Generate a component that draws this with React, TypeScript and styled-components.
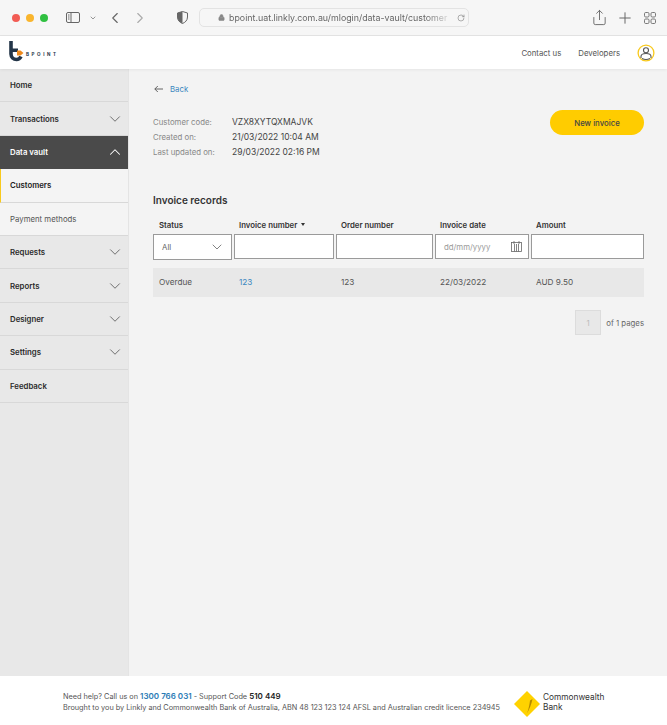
import { ChevronDown, ChevronLeft, ChevronRight, ChevronUp, Lock, Plus, RotateCw, Share } from "lucide-react";
import styled, { createGlobalStyle } from "styled-components";

const GlobalStyle = createGlobalStyle`
  html, body {
    margin: 0;
    padding: 0;
    background: #f3f3f3;
  }
  * {
    box-sizing: border-box;
  }
  body {
    font-family: Inter, "Liberation Sans", sans-serif;
    font-size: 7.8px;
    color: #444;
  }
`;

const COLUMNS = "79px 100px 97px 94px 1fr";

const Page = styled.div`
  width: 667px;
  height: 725px;
  display: flex;
  flex-direction: column;
  overflow: hidden;
`;

const Chrome = styled.div`
  height: 36px;
  flex: none;
  display: flex;
  align-items: center;
  background: #f6f6f6;
  border-bottom: 1px solid #e4e4e4;
  padding: 0 11px 0 12px;
  color: #666;
`;

const Light = styled.span<{ $color: string }>`
  width: 8px;
  height: 8px;
  border-radius: 50%;
  margin-right: 6px;
  background: ${(p) => p.$color};
`;

const ChromeIcons = styled.div`
  display: flex;
  align-items: center;
  margin-left: 12px;
`;

const UrlBar = styled.div`
  width: 270px;
  height: 19px;
  margin-left: 11px;
  border: 1px solid #e3e3e3;
  border-radius: 5px;
  display: flex;
  align-items: center;
  padding: 0 3px 0 18px;
  font-size: 8.85px;
  color: #666;
  gap: 4px;
  white-space: nowrap;
  overflow: hidden;
`;

const UrlText = styled.span`
  flex: 1;
  mask-image: linear-gradient(to right, #000 88%, transparent 100%);
`;

const ChromeRight = styled.div`
  margin-left: auto;
  display: flex;
  align-items: center;
  gap: 8px;
`;

const TabsSlot = styled.span`
  display: flex;
  margin-left: 2.5px;
`;

const Header = styled.header`
  height: 33px;
  flex: none;
  background: #fff;
  display: flex;
  align-items: center;
  padding: 0 12px 0 9px;
  box-shadow: 0 1px 3px rgba(0, 0, 0, 0.06);
  position: relative;
`;

const LogoMark = styled.svg`
  margin-top: -2px;
`;

const LogoText = styled.span`
  font-size: 4.5px;
  font-weight: 700;
  letter-spacing: 2.6px;
  color: #233548;
  margin: 3px 0 0 1px;
`;

const HeaderNav = styled.nav`
  margin-left: auto;
  display: flex;
  align-items: center;
  gap: 17px;
  color: #555;
`;

const Body = styled.div`
  flex: 1;
  display: flex;
  min-height: 0;
`;

const Sidebar = styled.aside`
  width: 129px;
  flex: none;
  background: #e8e8e8;
  border-right: 1px solid #e4e4e4;
`;

const NavRow = styled.div<{ $active?: boolean; $sub?: boolean; $current?: boolean }>`
  height: 33.4px;
  display: flex;
  align-items: center;
  justify-content: space-between;
  padding: 0 4px 0 ${(p) => (p.$current ? 9 : 10)}px;
  font-weight: ${(p) => (p.$sub && !p.$current ? 400 : 600)};
  font-size: 7.8px;
  color: ${(p) => (p.$active ? "#fff" : p.$current ? "#222" : p.$sub ? "#555" : "#2b2b2b")};
  background: ${(p) => (p.$active ? "#4a4a4a" : p.$sub ? "#f4f4f4" : "#e8e8e8")};
  border-bottom: 1px solid ${(p) => (p.$active ? "#4a4a4a" : "#d8d8d8")};
  border-left: ${(p) => (p.$current ? "1px solid #f8c91c" : "none")};
`;

const Main = styled.main`
  flex: 1;
  padding: 14px 23px 0 24px;
  min-width: 0;
`;

const BackRow = styled.div`
  display: flex;
  align-items: center;
  gap: 7px;
  height: 12px;
  padding-left: 1px;
  color: #555;
`;

const BlueLink = styled.a`
  color: #3a87c0;
`;

const InfoRow = styled.div`
  display: flex;
  justify-content: space-between;
  align-items: flex-start;
  margin-top: 19px;
`;

const InfoGrid = styled.dl`
  display: grid;
  grid-template-columns: 79px auto;
  grid-auto-rows: 15px;
  align-items: center;
  margin: 0;
`;

const InfoLabel = styled.dt`
  color: #888;
`;

const InfoValue = styled.dd`
  margin: 0;
  color: #444;
  font-size: 8.5px;
`;

const PrimaryButton = styled.button`
  width: 94px;
  height: 25px;
  margin-top: -4px;
  border: 0;
  border-radius: 13px;
  background: #ffcc00;
  color: #444;
  font: inherit;
  font-weight: 500;
`;

const SectionTitle = styled.h2`
  margin: 35px 0 0;
  font-size: 10px;
  font-weight: 600;
  color: #333;
  line-height: 13px;
`;

const RecordGrid = styled.div`
  display: grid;
  grid-template-columns: ${COLUMNS};
  column-gap: 2px;
  margin-top: 10px;
`;

const ColHead = styled.div`
  height: 17px;
  padding: 0 0 1px 5px;
  font-weight: 600;
  color: #333;
  display: flex;
  align-items: center;
  gap: 4px;

  &:first-child {
    padding-left: 6px;
  }
`;

const SortMark = styled.span`
  width: 0;
  height: 0;
  border-left: 2.5px solid transparent;
  border-right: 2.5px solid transparent;
  border-top: 3px solid #333;
  margin-top: -2px;
`;

const FilterCell = styled.div<{ $tall?: boolean }>`
  height: ${(p) => (p.$tall ? 26 : 25)}px;
  background: #fff;
  border: 1px solid #9a9a9a;
  display: flex;
  align-items: center;
  justify-content: space-between;
  padding: 0 6px 0 8px;
  color: #666;
`;

const Placeholder = styled.span`
  color: #999;
`;

const DataRow = styled.div`
  display: grid;
  grid-template-columns: ${COLUMNS};
  column-gap: 2px;
  align-items: center;
  height: 29px;
  margin-top: 8px;
  padding-bottom: 1px;
  background: #e8e8e8;
`;

const DataCell = styled.div`
  padding-left: 5px;
  color: #555;
  font-size: 8.2px;

  &:first-child {
    padding-left: 6px;
  }
`;

const Pager = styled.div`
  display: flex;
  justify-content: flex-end;
  align-items: center;
  gap: 5px;
  margin-top: 13px;
  color: #666;
`;

const PageBox = styled.div`
  width: 26px;
  height: 25px;
  background: #e8e8e8;
  border: 1px solid #dcdcdc;
  color: #bbb;
  display: flex;
  align-items: center;
  justify-content: center;
`;

const Footer = styled.footer`
  height: 49px;
  flex: none;
  background: #fff;
  display: flex;
  align-items: center;
  padding: 7px 0 0 63px;
`;

const FooterText = styled.div`
  width: 451px;
  color: #555;
  font-size: 7.3px;
  line-height: 11.5px;
  margin-top: -4px;
`;

const Phone = styled.strong`
  color: #2a7ab5;
  font-weight: 600;
  font-size: 8px;
`;

const Code = styled.strong`
  color: #222;
  font-weight: 600;
  font-size: 8px;
`;

const BankName = styled.div`
  margin: -5px 0 0 3px;
  font-size: 8.3px;
  line-height: 10px;
  color: #333;
`;

const navTop = [
  { label: "Home" },
  { label: "Transactions", chevron: true },
];
const navBottom = ["Requests", "Reports", "Designer", "Settings"];

function Logo() {
  return (
    <LogoMark width="16" height="21" viewBox="0 0 16 21" fill="none">
      <path d="M2 0V13a5.500 5.500 0 0 0 5.500 5.500c2 0 3.500-1 4.500-3M2 9.300H9" stroke="#233548" strokeWidth="3.600" />
      <path d="M8 9.500h3.500L14.500 12l-3 2.500H8z" fill="#ee8a1d" />
    </LogoMark>
  );
}

function SidebarToggle() {
  return (
    <svg width="14" height="11" viewBox="0 0 14 11" fill="none" stroke="#666" strokeWidth="1">
      <rect x="0.500" y="0.500" width="13" height="10" rx="1.500" />
      <path d="M5 0.500v10M2 3h1.500M2 5h1.500M2 7h1.500" />
    </svg>
  );
}

function Shield() {
  return (
    <svg width="11" height="13" viewBox="0 0 11 13">
      <path d="M5.500 0.500 10.500 2v4c0 3.500-2.500 5.500-5 6.500C3 11.500 0.500 9.500 0.500 6V2z" fill="none" stroke="#666" />
      <path d="M5.500 0.500 0.500 2v4c0 3.500 2.500 5.500 5 6.500z" fill="#666" />
    </svg>
  );
}

function Tabs() {
  return (
    <svg width="12" height="12" viewBox="0 0 12 12" fill="none" stroke="#777" strokeWidth="1">
      <rect x="0.500" y="0.500" width="4.500" height="4.500" rx="1.200" />
      <rect x="7" y="0.500" width="4.500" height="4.500" rx="1.200" />
      <rect x="0.500" y="7" width="4.500" height="4.500" rx="1.200" />
      <rect x="7" y="7" width="4.500" height="4.500" rx="1.200" />
    </svg>
  );
}

function Avatar() {
  return (
    <svg width="18" height="18" viewBox="0 0 18 18" fill="none">
      <circle cx="9" cy="9" r="7.900" fill="#fff" stroke="#f8c91c" strokeWidth="1.300" />
      <circle cx="9" cy="6.300" r="2.500" stroke="#555" strokeWidth="1.100" />
      <path d="M4 14v-1.500c0-2 1.500-3 5-3s5 1 5 3V14M5 14.500c2.500 1.300 5.500 1.300 8 0" stroke="#555" strokeWidth="1.100" />
    </svg>
  );
}

function BackArrow() {
  return (
    <svg width="9" height="8" viewBox="0 0 9 8" fill="none" stroke="#555" strokeWidth="0.900">
      <path d="M9 4H0.800M3.800 1 0.800 4l3 3" />
    </svg>
  );
}

function Calendar() {
  return (
    <svg width="11" height="11" viewBox="0 0 11 11" fill="none" stroke="#666" strokeWidth="0.800">
      <rect x="0.500" y="1.500" width="10" height="9" />
      <path d="M3 0v3M8 0v3M3.500 3v7.500M5.500 3v7.500M7.500 3v7.500" />
    </svg>
  );
}

function BankLogo() {
  return (
    <svg width="26" height="26" viewBox="0 0 26 26">
      <path d="M13 0 26 13 13 26 0 13z" fill="#ffd200" />
      <path d="M16 9.500 18.500 8C17.500 13 15.500 18 13 22.500 14.500 18 15.500 14 16 9.500z" fill="#b58a00" />
    </svg>
  );
}

export default function App() {
  return (
    <Page>
      <GlobalStyle />
      <Chrome>
        <Light $color="#f25c54" />
        <Light $color="#f9b52d" />
        <Light $color="#30c041" />
        <ChromeIcons>
          <SidebarToggle />
          <ChevronDown size={8} style={{ marginLeft: 9 }} />
          <ChevronLeft size={18} strokeWidth={1.500} style={{ marginLeft: 9 }} />
          <ChevronRight size={18} strokeWidth={1.500} color="#aaa" style={{ marginLeft: 7 }} />
          <span style={{ width: 28 }} />
          <Shield />
        </ChromeIcons>
        <UrlBar>
          <Lock size={7} fill="#888" color="#888" />
          <UrlText>bpoint.uat.linkly.com.au/mlogin/data-vault/customer</UrlText>
          <RotateCw size={8} color="#888" />
        </UrlBar>
        <ChromeRight>
          <Share size={17} strokeWidth={1.300} />
          <Plus size={18} strokeWidth={1.300} />
          <TabsSlot>
            <Tabs />
          </TabsSlot>
        </ChromeRight>
      </Chrome>
      <Header>
        <Logo />
        <LogoText>BPOINT</LogoText>
        <HeaderNav>
          <span>Contact us</span>
          <span>Developers</span>
          <Avatar />
        </HeaderNav>
      </Header>
      <Body>
        <Sidebar>
          {navTop.map((n) => (
            <NavRow key={n.label}>
              {n.label}
              {n.chevron && <ChevronDown size={18} strokeWidth={1.100} color="#555" />}
            </NavRow>
          ))}
          <NavRow $active>
            Data vault
            <ChevronUp size={18} strokeWidth={1.400} color="#fff" />
          </NavRow>
          <NavRow $sub $current>Customers</NavRow>
          <NavRow $sub>Payment methods</NavRow>
          {navBottom.map((label) => (
            <NavRow key={label}>
              {label}
              <ChevronDown size={18} strokeWidth={1.100} color="#555" />
            </NavRow>
          ))}
          <NavRow>Feedback</NavRow>
        </Sidebar>
        <Main>
          <BackRow>
            <BackArrow />
            <BlueLink>Back</BlueLink>
          </BackRow>
          <InfoRow>
            <InfoGrid>
              <InfoLabel>Customer code:</InfoLabel>
              <InfoValue>VZX8XYTQXMAJVK</InfoValue>
              <InfoLabel>Created on:</InfoLabel>
              <InfoValue>21/03/2022 10:04 AM</InfoValue>
              <InfoLabel>Last updated on:</InfoLabel>
              <InfoValue>29/03/2022 02:16 PM</InfoValue>
            </InfoGrid>
            <PrimaryButton>New invoice</PrimaryButton>
          </InfoRow>
          <SectionTitle>Invoice records</SectionTitle>
          <RecordGrid>
            <ColHead>Status</ColHead>
            <ColHead>
              Invoice number
              <SortMark />
            </ColHead>
            <ColHead>Order number</ColHead>
            <ColHead>Invoice date</ColHead>
            <ColHead>Amount</ColHead>
            <FilterCell $tall>
              All
              <ChevronDown size={16} strokeWidth={1} color="#444" />
            </FilterCell>
            <FilterCell />
            <FilterCell />
            <FilterCell>
              <Placeholder>dd/mm/yyyy</Placeholder>
              <Calendar />
            </FilterCell>
            <FilterCell />
          </RecordGrid>
          <DataRow>
            <DataCell>Overdue</DataCell>
            <DataCell>
              <BlueLink>123</BlueLink>
            </DataCell>
            <DataCell>123</DataCell>
            <DataCell>22/03/2022</DataCell>
            <DataCell>AUD 9.50</DataCell>
          </DataRow>
          <Pager>
            <PageBox>1</PageBox>
            of 1 pages
          </Pager>
        </Main>
      </Body>
      <Footer>
        <FooterText>
          Need help? Call us on <Phone>1300 766 031</Phone> - Support Code <Code>510 449</Code>
          <br />
          Brought to you by Linkly and Commonwealth Bank of Australia, ABN 48 123 123 124 AFSL and Australian credit licence 234945
        </FooterText>
        <BankLogo />
        <BankName>
          Commonwealth
          <br />
          Bank
        </BankName>
      </Footer>
    </Page>
  );
}
